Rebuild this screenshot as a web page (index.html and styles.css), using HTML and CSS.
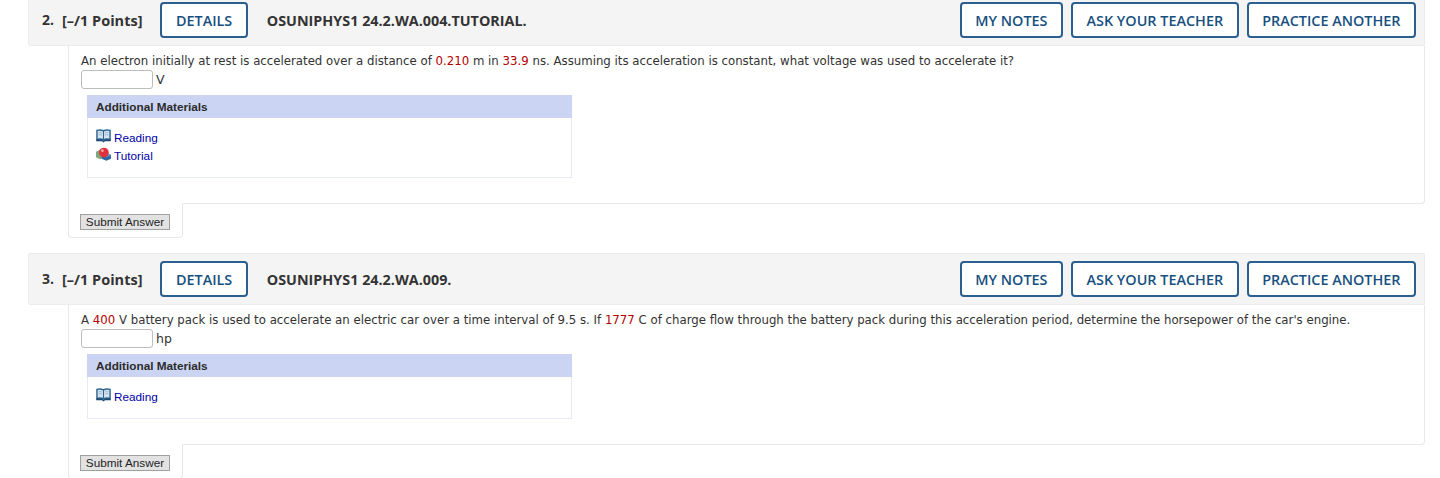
FILE: index.html
```html
<!DOCTYPE html>
<html lang="en">
<head>
    <meta charset="UTF-8">
    <meta name="viewport" content="width=device-width, initial-scale=1.0">
    <title>Assignment Questions</title>
    <link rel="stylesheet" href="styles.css">
</head>
<body>
    <svg class="defs" width="0" height="0" aria-hidden="true">
        <symbol id="icon-book" viewBox="0 0 16 14">
            <path d="M1 1 Q5 -.2 8 1.6 Q11 -.2 15 1 V10.6 Q11 9.6 8 11 Q5 9.6 1 10.6 Z" fill="#d5e3ef" stroke="#2a6492" stroke-width="1.5"/>
            <path d="M8 1.6 V11" stroke="#2a6492" stroke-width="1.1"/>
            <path d="M2.8 3.6 Q5 3 6.6 3.8 M2.8 5.8 Q5 5.2 6.6 6 M9.4 3.8 Q11 3 13.2 3.6 M9.4 6 Q11 5.2 13.2 5.8" stroke="#94aec6" stroke-width=".9" fill="none"/>
            <path d="M.2 10.8 Q5 10 8 11.8 Q11 10 15.8 10.8 V12.6 H9.6 L8 13.8 L6.4 12.6 H.2 Z" fill="#1c4a75"/>
        </symbol>
        <symbol id="icon-tutorial" viewBox="0 0 16 14">
            <path d="M0 4.5 L4.5 2.5 L8 4.5 V10.5 L4.5 12.5 L0 10.5 Z" fill="#7fa77c"/>
            <path d="M6 8 L11 5.5 L16 8 V12 L11 14.2 L6 12 Z" fill="#2f6aa5"/>
            <path d="M6 8 L11 10.2 L16 8 L11 5.5 Z" fill="#6b9bd0"/>
            <circle cx="8.4" cy="5.4" r="5.2" fill="#e0323c"/>
            <circle cx="6.8" cy="3.4" r="1.5" fill="#f6a5a5"/>
        </symbol>
    </svg>

    <div class="page">
        <section class="question">
            <header class="q-header">
                <span class="q-number">2.</span>
                <span class="q-points">[&ndash;/1 Points]</span>
                <button class="q-btn">DETAILS</button>
                <span class="q-code">OSUNIPHYS1 24.2.WA.004.TUTORIAL.</span>
                <div class="q-actions">
                    <button class="q-btn">MY NOTES</button>
                    <button class="q-btn">ASK YOUR TEACHER</button>
                    <button class="q-btn">PRACTICE ANOTHER</button>
                </div>
            </header>
            <div class="q-content">
                <p class="q-text">An electron initially at rest is accelerated over a distance of <span class="given">0.210</span> m in <span class="given">33.9</span> ns. Assuming its acceleration is constant, what voltage was used to accelerate it?</p>
                <div class="answer-row"><input type="text" class="answer"> <span>V</span></div>
                <div class="materials">
                    <div class="materials-title">Additional Materials</div>
                    <ul class="materials-list">
                        <li><svg class="mat-icon"><use href="#icon-book"/></svg><a href="#">Reading</a></li>
                        <li><svg class="mat-icon"><use href="#icon-tutorial"/></svg><a href="#">Tutorial</a></li>
                    </ul>
                </div>
            </div>
            <div class="submit-tab"><button class="submit-btn">Submit Answer</button></div>
        </section>

        <section class="question">
            <header class="q-header">
                <span class="q-number">3.</span>
                <span class="q-points">[&ndash;/1 Points]</span>
                <button class="q-btn">DETAILS</button>
                <span class="q-code">OSUNIPHYS1 24.2.WA.009.</span>
                <div class="q-actions">
                    <button class="q-btn">MY NOTES</button>
                    <button class="q-btn">ASK YOUR TEACHER</button>
                    <button class="q-btn">PRACTICE ANOTHER</button>
                </div>
            </header>
            <div class="q-content">
                <p class="q-text">A <span class="given">400</span> V battery pack is used to accelerate an electric car over a time interval of 9.5 s. If <span class="given">1777</span> C of charge flow through the battery pack during this acceleration period, determine the horsepower of the car's engine.</p>
                <div class="answer-row"><input type="text" class="answer"> <span>hp</span></div>
                <div class="materials">
                    <div class="materials-title">Additional Materials</div>
                    <ul class="materials-list">
                        <li><svg class="mat-icon"><use href="#icon-book"/></svg><a href="#">Reading</a></li>
                    </ul>
                </div>
            </div>
            <div class="submit-tab"><button class="submit-btn">Submit Answer</button></div>
        </section>
    </div>
</body>
</html>
```

FILE: styles.css
```css
* {
    margin: 0;
    padding: 0;
    box-sizing: border-box;
}
html, body {
    height: 100%;
    overflow: hidden;
}
body {
    background: white;
    color: #333;
    font-family: "DejaVu Sans", sans-serif;
    font-size: 11.75px;
}
.defs {
    position: absolute;
}
.page {
    margin: -6px 15px 0 28px;
}
.question {
    margin-bottom: 15px;
}
.q-header {
    display: flex;
    align-items: center;
    height: 52px;
    padding: 0 8px 0 13px;
    background: #f4f4f4;
    border: 1px solid #ececec;
    border-radius: 2px;
    font-family: "Open Sans", sans-serif;
    font-size: 14.5px;
    font-weight: 600;
}
.q-number {
    font-size: 14px;
    font-weight: 700;
    margin-right: 8px;
    position: relative;
    top: -1px;
}
.q-points {
    font-weight: 700;
    margin-right: 18px;
}
.q-code {
    margin-left: 19px;
    font-size: 14.35px;
    font-weight: 700;
}
.q-actions {
    display: flex;
    gap: 8px;
    margin-left: auto;
}
.q-btn {
    height: 36px;
    padding: 0 13.5px;
    background: white;
    border: 2px solid #2a5f8f;
    border-radius: 4px;
    color: #17507f;
    font-family: "Open Sans", sans-serif;
    font-size: 14.4px;
    font-weight: 600;
}
.q-content {
    margin-left: 40px;
    padding: 7px 12px 25px;
    background: white;
    border: 1px solid #e8e8e8;
    border-top: none;
    border-radius: 0 0 4px 0;
}
.q-text {
    line-height: 17px;
}
.given {
    color: #b30000;
}
.answer-row {
    display: flex;
    align-items: center;
    gap: 3px;
    height: 19px;
    font-size: 12.5px;
}
.answer {
    width: 72px;
    height: 19px;
    background: white;
    border: 1px solid #bdbdbd;
    border-radius: 3px;
}
.materials {
    width: 485px;
    margin: 6px 0 0 6px;
    border: 1px solid #e6eaf6;
    font-family: "Liberation Sans", sans-serif;
}
.materials-title {
    height: 23px;
    margin: -1px -1px 0;
    padding-left: 9px;
    background: #cbd5f3;
    color: #2b2b2b;
    font-size: 11.75px;
    font-weight: 700;
    line-height: 23px;
}
.materials-list {
    padding: 10px 0 13px 8px;
    list-style: none;
}
.materials-list li {
    display: flex;
    align-items: center;
    height: 18px;
}
.mat-icon {
    width: 15px;
    height: 14px;
    margin-right: 3px;
    position: relative;
    top: -1px;
}
.materials-list a {
    color: #0000aa;
    font-size: 11.75px;
    text-decoration: none;
}
.submit-tab {
    position: relative;
    display: flex;
    align-items: center;
    width: 115px;
    height: 35px;
    margin: -1px 0 0 40px;
    padding: 2px 0 0 11px;
    background: white;
    border: 1px solid #e8e8e8;
    border-top-color: white;
    border-radius: 0 0 4px 4px;
}
.submit-btn {
    width: 90px;
    height: 16px;
    background: #e2e2e2;
    border: 1px solid #a0a0a0;
    color: #222;
    font-family: "Liberation Sans", sans-serif;
    font-size: 11.75px;
    line-height: 14px;
}
```
